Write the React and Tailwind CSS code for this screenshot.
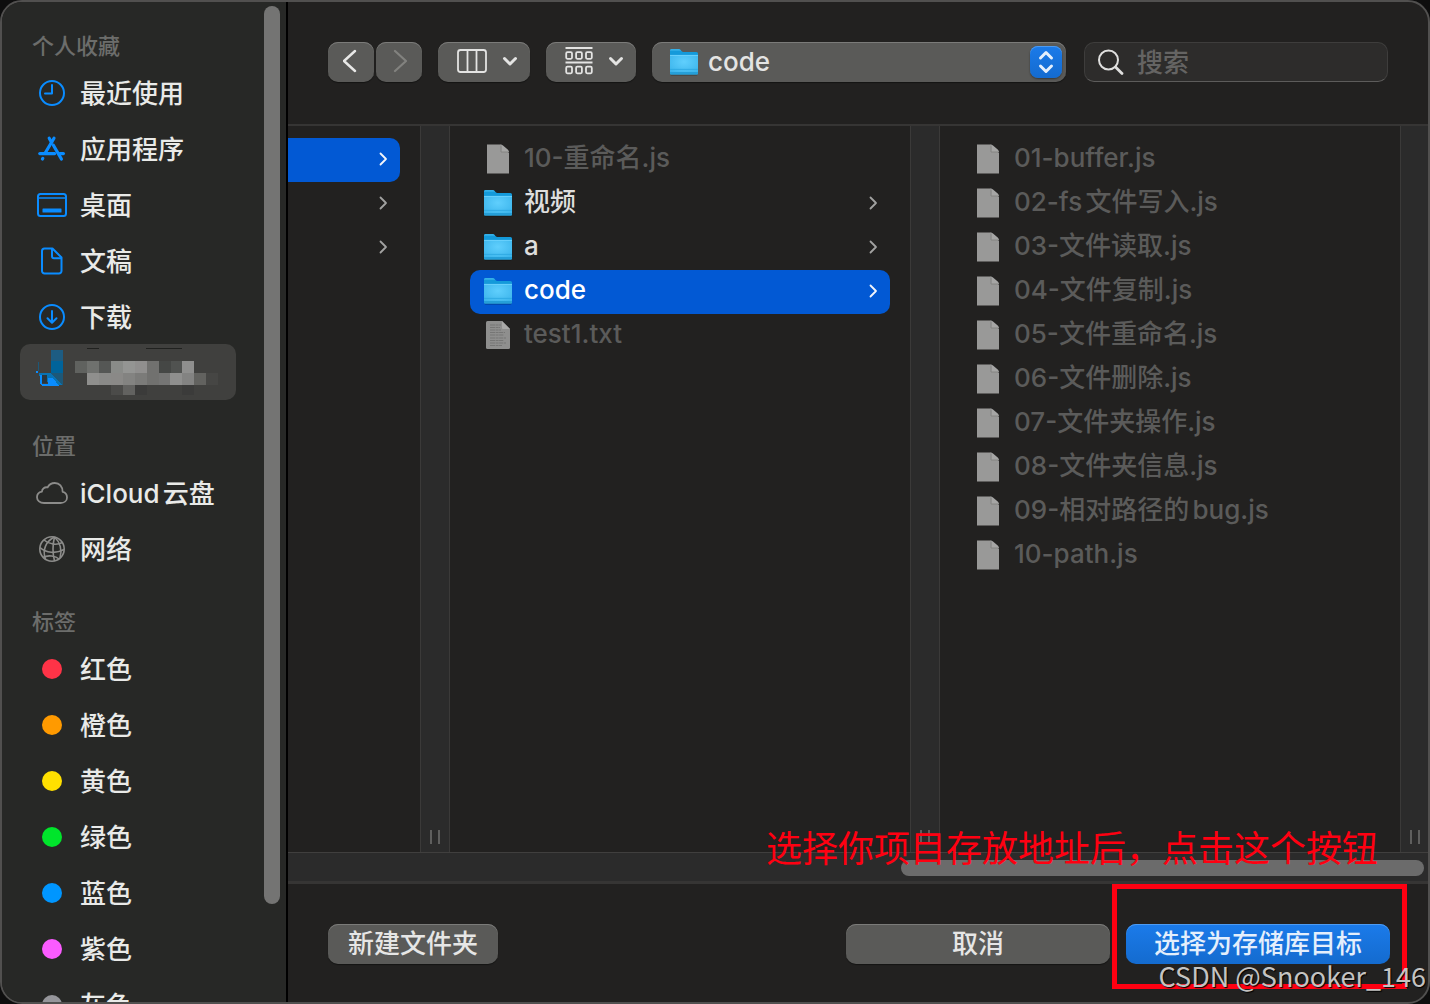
import React from "react";

const BLUE = "#0a8cff";

function ClockIcon() {
  return (
    <svg width="32" height="32" viewBox="0 0 32 32" fill="none" stroke={BLUE} strokeWidth="2">
      <circle cx="16" cy="16" r="12" />
      <path d="M16 8V16.500H9" strokeLinecap="round" strokeLinejoin="round" />
    </svg>
  );
}

function AppsIcon() {
  return (
    <svg width="32" height="32" viewBox="0 0 32 32" fill="none" stroke={BLUE} strokeWidth="3.2" strokeLinecap="round">
      <path d="M13.2 5.2L15.6 9.4" />
      <path d="M18 5.2L9.2 20" />
      <path d="M3.8 20.6H18.6" />
      <path d="M23.6 20.6H27.4" />
      <path d="M17.4 12.2L25.4 26" />
      <path d="M6.8 25.4L6.4 26" />
    </svg>
  );
}

function DesktopIcon() {
  return (
    <svg width="32" height="32" viewBox="0 0 32 32" fill="none" stroke={BLUE} strokeWidth="2">
      <rect x="2" y="5" width="28" height="22" rx="2.5" />
      <path d="M2 9H30" strokeWidth="1.6" />
      <rect x="6.5" y="19.5" width="19" height="4" rx="0.5" fill={BLUE} stroke="none" />
    </svg>
  );
}

function DocumentIcon() {
  return (
    <svg width="32" height="32" viewBox="0 0 32 32" fill="none" stroke={BLUE} strokeWidth="2" strokeLinejoin="round">
      <path d="M8.5 3.5H16.5L25.5 12.5V26A2.5 2.5 0 0 1 23 28.5H8.5A2.5 2.5 0 0 1 6 26V6A2.5 2.5 0 0 1 8.5 3.5Z" />
      <path d="M16 4V11.2A2 2 0 0 0 18 13.2H25" />
    </svg>
  );
}

function DownloadIcon() {
  return (
    <svg width="32" height="32" viewBox="0 0 32 32" fill="none" stroke={BLUE} strokeWidth="2" strokeLinecap="round" strokeLinejoin="round">
      <circle cx="16" cy="16" r="12" />
      <path d="M16 10V21.5M11.5 17.2L16 21.7L20.5 17.2" />
    </svg>
  );
}

function CloudIcon() {
  return (
    <svg width="32" height="32" viewBox="0 0 32 32" fill="none" stroke="#8c8c8a" strokeWidth="1.8" strokeLinejoin="round">
      <path d="M8 26H24.6C28.4 26 31 23.6 31 20.4C31 17.6 29.2 15.4 26.6 14.8C26.6 9.6 23.4 6 18.8 6C15.5 6 12.9 7.7 11.6 10.4C8.6 9.7 6 11.8 5.9 14.7C3 15.3 1 17.5 1 20.2C1 23.5 3.9 26 8 26Z" />
    </svg>
  );
}

function GlobeIcon() {
  return (
    <svg width="32" height="32" viewBox="0 0 32 32" fill="none" stroke="#8c8c8a" strokeWidth="1.6">
      <circle cx="16" cy="16" r="12.2" />
      <path d="M18.500 4C17 10 16.500 20 18.500 28" />
      <path d="M18.500 4C10 8 6 17 9.500 26" />
      <path d="M18.500 4C24 9 26.500 17 24 25" />
      <path d="M8 7C13 11.500 21 12.500 26.500 9.500" />
      <path d="M4 14.500C10 20 20 21 28 16.500" />
      <path d="M7 24.500C12 21.500 20 23 23 26" />
    </svg>
  );
}

function MosaicIcon() {
  return (
    <svg width="32" height="56" viewBox="0 0 32 56" shapeRendering="crispEdges">
      <rect x="15" y="6" width="12" height="11" fill="#1d5c82" />
      <rect x="15" y="17" width="12" height="12" fill="#00639a" />
      <path d="M3 29H15L27 41H15L3 32Z" fill="#0873b4" />
      <path d="M15 29H27V42L20 35Z" fill="#1d5878" />
      <rect x="2" y="18" width="1" height="9" fill="#1d5878" />
      <rect x="0" y="27" width="2" height="2" fill={BLUE} />
      <path d="M4 31H6V40H12V34H17L20 38L23 42H6L4 40Z" fill={BLUE} />
      <rect x="6" y="31" width="5" height="8" fill="#293740" />
    </svg>
  );
}

const MOSAIC = [
  [0, 17, "#60625f"], [12, 17, "#6f716e"], [24, 17, "#555755"], [36, 17, "#898b88"], [48, 17, "#949593"],
  [60, 17, "#908f8e"], [72, 17, "#71716f"], [84, 17, "#454745"], [96, 17, "#505250"], [107, 17, "#8f8f8e"],
  [12, 29, "#8f8f8d"], [24, 29, "#8a8a88"], [36, 29, "#8a8987"], [48, 29, "#838381"], [60, 29, "#7b7b79"],
  [72, 29, "#71716f"], [84, 29, "#757574"], [95, 29, "#8f8f8e"], [107, 29, "#838382"], [119, 29, "#62625f"],
  [131, 29, "#464644"], [36, 41, "#4b4b49"], [48, 41, "#626260"], [60, 41, "#3b3b3a"], [107, 41, "#3b3b3a"],
];

function MosaicName() {
  return (
    <svg width="144" height="56" viewBox="0 0 144 56" shapeRendering="crispEdges" role="img" aria-label="home">
      <rect x="12" y="4" width="12" height="1" fill="#20211f" />
      <rect x="71" y="4" width="36" height="1" fill="#20211f" />
      {MOSAIC.map(([x, y, c]) => (
        <rect key={x + "-" + y} x={x} y={y} width="12" height={y === 41 ? 10 : 12} fill={c} />
      ))}
    </svg>
  );
}

function FolderIcon() {
  return (
    <svg width="28" height="28" viewBox="0 0 28 28" className="shrink-0">
      <defs>
        <radialGradient id="folderFront" cx="0.5" cy="0.35" r="0.75">
          <stop offset="0" stopColor="#60cffd" />
          <stop offset="1" stopColor="#38b2ea" />
        </radialGradient>
      </defs>
      <rect x="0.5" y="25" width="27" height="2.5" rx="1" fill="#000" opacity="0.35" />
      <path d="M0 2.5Q0 1 1.5 1H8.5Q9.5 1 10.3 1.8L11.5 3Q12.3 4 13.5 4H26.5Q28 4 28 5.5V12H0Z" fill="#149ada" />
      <path d="M0 2.5Q0 1 1.5 1H8.5Q9.5 1 10.3 1.8L11.2 2.8H0Z" fill="#35b0e8" />
      <path d="M0 7H28V25.5Q28 26.5 27 26.5H1Q0 26.5 0 25.5Z" fill="url(#folderFront)" />
      <path d="M0 7.4H28" stroke="#74d6ff" strokeWidth="0.8" />
      <path d="M0 21.4H28" stroke="#2ba6df" strokeWidth="0.8" />
      <path d="M0 24H28V25.5Q28 26.5 27 26.5H1Q0 26.5 0 25.5Z" fill="#259fd8" />
    </svg>
  );
}

function FileIcon() {
  return (
    <svg width="28" height="30" viewBox="0 0 28 30" className="shrink-0">
      <path d="M3 0.5H17L25 9V29.5H3Z" fill="#999998" />
      <path d="M16.5 0.5Q18.5 2 17 8H25Q25 7 24 5.8L19 1.5Q17.5 0.5 16.5 0.5Z" fill="#a6a6a5" />
      <path d="M17 1.5V8H24.5" fill="none" stroke="#7d7d7c" strokeWidth="0.8" />
    </svg>
  );
}

function TextFileIcon() {
  return (
    <svg width="28" height="30" viewBox="0 0 28 30" className="shrink-0">
      <path d="M3.5 1H18L26 9V27.5Q26 29 24.5 29H3.5Q2 29 2 27.5V2.5Q2 1 3.5 1Z" fill="#8f8f8e" />
      <path d="M18 1L26 9H19Q18 9 18 8Z" fill="#aaaaa9" />
      <g stroke="#767675" strokeWidth="1.2" strokeDasharray="5 0.6 3 0.5 4 0.7">
        <path d="M6 5H17M6 7.5H16M6 10H17M6 12.5H21M6 15H20M6 18H22M6 20.5H20M6 23H22M6 25.5H18" />
      </g>
    </svg>
  );
}

function ChevronRight({ bright }) {
  return (
    <svg width="10" height="16" viewBox="0 0 10 16" fill="none" stroke={bright ? "#f2f5fb" : "#a2a2a1"} strokeWidth="1.8" strokeLinecap="round" strokeLinejoin="round" className="shrink-0">
      <path d="M2.500 2.500L8 8L2.500 13.500" />
    </svg>
  );
}

function ChevronDown() {
  return (
    <svg width="16" height="12" viewBox="0 0 16 12" fill="none" stroke="#e4e4e3" strokeWidth="3" strokeLinecap="round" strokeLinejoin="round">
      <path d="M2.500 3.500L8 9L13.500 3.500" />
    </svg>
  );
}

function ColumnsIcon() {
  return (
    <svg width="32" height="28" viewBox="0 0 32 28" fill="none" stroke="#e4e4e3" strokeWidth="1.8">
      <rect x="2" y="3" width="28" height="22" rx="2.5" />
      <path d="M11.500 3V25M20.500 3V25" />
    </svg>
  );
}

function GroupIcon() {
  return (
    <svg width="28" height="30" viewBox="0 0 28 30" fill="none" stroke="#e4e4e3" strokeWidth="1.8">
      <path d="M0.500 2H27.500M0.500 16.500H27.500" />
      <rect x="1.2" y="6.2" width="5.800" height="6.600" rx="1.200" />
      <rect x="11.100" y="6.200" width="5.800" height="6.600" rx="1.200" />
      <rect x="21" y="6.200" width="5.800" height="6.600" rx="1.200" />
      <rect x="1.200" y="20.700" width="5.800" height="6.600" rx="1.200" />
      <rect x="11.100" y="20.700" width="5.800" height="6.600" rx="1.200" />
      <rect x="21" y="20.700" width="5.800" height="6.600" rx="1.200" />
    </svg>
  );
}

const FAVORITES = [
  ["最近使用", ClockIcon],
  ["应用程序", AppsIcon],
  ["桌面", DesktopIcon],
  ["文稿", DocumentIcon],
  ["下载", DownloadIcon],
];

const LOCATIONS = [
  ["iCloud云盘", CloudIcon],
  ["网络", GlobeIcon],
];

const TAGS = [
  ["红色", "#ff3347"],
  ["橙色", "#ff9a00"],
  ["黄色", "#ffe000"],
  ["绿色", "#00e52b"],
  ["蓝色", "#0096ff"],
  ["紫色", "#fb5bff"],
  ["灰色", "#96969b"],
];

const FOLDER_ITEMS = [
  { name: "10-重命名.js", kind: "file" },
  { name: "视频", kind: "folder" },
  { name: "a", kind: "folder" },
  { name: "code", kind: "folder", selected: true },
  { name: "test1.txt", kind: "text" },
];

const CODE_ITEMS = [
  "01-buffer.js",
  "02-fs文件写入.js",
  "03-文件读取.js",
  "04-文件复制.js",
  "05-文件重命名.js",
  "06-文件删除.js",
  "07-文件夹操作.js",
  "08-文件夹信息.js",
  "09-相对路径的bug.js",
  "10-path.js",
].map((name) => ({ name, kind: "file" }));

function Heading({ children, first }) {
  return (
    <h2 className={(first ? "pt-[26px]" : "pt-7") + " pl-3 text-[22px] leading-9 font-medium text-[#6c6d6b]"}>
      {children}
    </h2>
  );
}

function SideItem({ label, icon }) {
  return (
    <li>
      <button type="button" className="flex h-14 w-full items-center gap-3 rounded-[10px] pt-0.5 pl-4 text-left whitespace-nowrap">
        <span className="flex w-8 shrink-0 justify-center">{icon}</span>
        {label}
      </button>
    </li>
  );
}

function Sidebar() {
  return (
    <aside className="flex w-[286px] shrink-0 overflow-hidden border-r-2 border-black bg-[#272826]">
      <nav className="min-w-0 flex-1 pr-7 pl-[18px] text-[26px] font-medium text-[#e9eae8]">
        <Heading first>个人收藏</Heading>
        <ul>
          {FAVORITES.map(([name, Icon]) => (
            <SideItem key={name} icon={<Icon />} label={name} />
          ))}
          <li>
            <button type="button" className="flex h-14 w-full items-center gap-[7px] rounded-[10px] bg-[#40403e] pl-4">
              <MosaicIcon />
              <MosaicName />
            </button>
          </li>
        </ul>
        <Heading>位置</Heading>
        <ul>
          {LOCATIONS.map(([name, Icon]) => (
            <SideItem key={name} icon={<Icon />} label={name} />
          ))}
        </ul>
        <Heading>标签</Heading>
        <ul>
          {TAGS.map(([name, color]) => (
            <SideItem
              key={name}
              label={name}
              icon={<span className="size-5 rounded-full" style={{ backgroundColor: color }} />}
            />
          ))}
        </ul>
      </nav>
      <div className="mt-1 mr-1.5 h-[898px] w-4 shrink-0 rounded-full bg-[#747473]" />
    </aside>
  );
}

const ICONS = { file: FileIcon, folder: FolderIcon, text: TextFileIcon };

function Row({ item }) {
  const Icon = ICONS[item.kind];
  const folder = item.kind === "folder";
  const tone = item.selected ? "bg-[#0259d4] text-white" : folder ? "text-[#dededd]" : "text-[#5b5b5a]";
  return (
    <li>
      <button type="button" className={"flex h-11 w-full items-center gap-3 rounded-[10px] pr-3 pb-0.5 pl-3.5 text-left leading-9 whitespace-nowrap " + tone}>
        <Icon />
        <span className="flex-1 pb-0.5">{item.name}</span>
        {folder && <ChevronRight bright={item.selected} />}
      </button>
    </li>
  );
}

function Divider({ last }) {
  return (
    <div className={(last ? "w-7" : "w-[30px] border-r") + " flex shrink-0 items-end justify-center gap-1.5 border-l border-[#3b3a39] bg-[#2b2b2b] pb-2"}>
      <span className="h-3.5 w-0.5 bg-[#5f5f5e]" />
      <span className="h-3.5 w-0.5 bg-[#5f5f5e]" />
    </div>
  );
}

const CONTROL =
  "flex h-10 items-center rounded-[10px] bg-[#5a5a58] shadow-[inset_0_1px_0_#7b7b79,0_1px_1px_rgba(0,0,0,0.4)]";

function Toolbar() {
  return (
    <header className="flex h-[124px] shrink-0 items-start border-b-2 border-[#363534] pt-10 pr-10 pl-10">
      <button type="button" aria-label="后退" className={CONTROL + " w-[46px] justify-center"}>
        <svg width="16" height="26" viewBox="0 0 16 26" fill="none" stroke="#e8e8e7" strokeWidth="2.4" strokeLinecap="round" strokeLinejoin="round">
          <path d="M12 2L1 12L12 22" />
        </svg>
      </button>
      <button type="button" aria-label="前进" className={CONTROL + " ml-0.5 w-[46px] justify-center"}>
        <svg width="16" height="26" viewBox="0 0 16 26" fill="none" stroke="#82827f" strokeWidth="2.2" strokeLinecap="round" strokeLinejoin="round">
          <path d="M4 2L15 12L4 22" />
        </svg>
      </button>
      <button type="button" aria-label="分栏显示" className={CONTROL + " ml-4 w-[92px] justify-between pr-3 pb-0.5 pl-[18px]"}>
        <ColumnsIcon />
        <ChevronDown />
      </button>
      <button type="button" aria-label="分组方式" className={CONTROL + " ml-4 w-[90px] justify-between pr-3 pb-0.5 pl-[19px]"}>
        <GroupIcon />
        <ChevronDown />
      </button>
      <div className={CONTROL + " ml-4 min-w-0 flex-1 pr-1 pl-[18px]"}>
        <FolderIcon />
        <select aria-label="位置" className="h-10 min-w-0 flex-1 appearance-none bg-transparent pb-1 pl-2.5 text-[26px] font-medium text-[#e4e4e3] outline-none">
          <option>code</option>
        </select>
        <span className="flex size-8 items-center justify-center rounded-lg bg-linear-to-b from-[#1b7bea] to-[#146bcf] shadow-[inset_0_1px_0_#4d9bf2,0_1px_2px_rgba(0,0,0,0.4)]">
          <svg width="18" height="24" viewBox="0 0 18 24" fill="none" stroke="#e4effc" strokeWidth="3" strokeLinecap="round" strokeLinejoin="round">
            <path d="M3.500 8L9 2.500L14.500 8M3.500 16L9 21.500L14.500 16" />
          </svg>
        </span>
      </div>
      <label className="ml-[18px] flex h-10 w-[304px] items-center gap-3 rounded-[10px] border border-[#3e3d3c] border-b-[#5d5c5b] bg-[#2d2c2b] pl-3">
        <svg width="28" height="28" viewBox="0 0 28 28" fill="none" stroke="#dfdfde" strokeLinecap="round" className="shrink-0">
          <circle cx="11.500" cy="12" r="9.500" strokeWidth="2" />
          <path d="M18.500 19L25 25.500" strokeWidth="2.800" />
        </svg>
        <input
          type="text"
          aria-label="搜索"
          placeholder="搜索"
          className="min-w-0 flex-1 bg-transparent text-[26px] font-medium text-[#dededd] outline-none placeholder:text-[#656463]"
        />
      </label>
    </header>
  );
}

export default function App() {
  return (
    <div className="h-screen bg-[#0e0e0e] font-['Inter','Noto_Sans_CJK_SC',sans-serif] [text-autospace:normal]">
      <div className="relative flex h-full overflow-hidden rounded-[22px] border-2 border-[#51504f] bg-[#222120]">
        <Sidebar />
        <main className="flex min-w-0 flex-1 flex-col">
          <Toolbar />
          <section className="flex min-h-0 flex-1 text-[26px] font-medium">
            <ul className="w-[132px] shrink-0 pt-3 pr-5">
              {[true, false, false].map((selected, i) => (
                <li key={i}>
                  <button
                    type="button"
                    aria-label="打开文件夹"
                    className={"flex h-11 w-full items-center justify-end rounded-r-[10px] pr-3 pb-0.5 " + (selected ? "bg-[#0259d4]" : "")}
                  >
                    <ChevronRight bright={selected} />
                  </button>
                </li>
              ))}
            </ul>
            <Divider />
            <ul className="min-w-0 flex-1 px-5 pt-3">
              {FOLDER_ITEMS.map((item) => (
                <Row key={item.name} item={item} />
              ))}
            </ul>
            <Divider />
            <ul className="min-w-0 flex-1 px-5 pt-3">
              {CODE_ITEMS.map((item) => (
                <Row key={item.name} item={item} />
              ))}
            </ul>
            <Divider last />
          </section>
          <div className="flex h-8 shrink-0 justify-end border-t border-b-[3px] border-t-[#403f3e] border-b-[#363534] bg-[#2b2b2b] pt-[7px] pr-1">
            <div className="h-4 w-[46%] rounded-full bg-[#6b6b6b]" />
          </div>
          <footer className="flex h-[118px] shrink-0 items-start pt-10 pr-[38px] pl-10 text-[26px] font-medium text-[#e6e6e5]">
            <button type="button" className={CONTROL + " w-[170px] justify-center pb-0.5"}>
              新建文件夹
            </button>
            <button type="button" className={CONTROL + " mr-4 ml-auto w-[264px] justify-center pb-0.5"}>
              取消
            </button>
            <div className="relative">
              <button type="button" className="flex h-10 w-[264px] items-center justify-center rounded-[10px] bg-linear-to-b from-[#1b7bea] to-[#146bcf] pb-0.5 text-[#e4effc] shadow-[inset_0_1px_0_#4d9bf2]">
                选择为存储库目标
              </button>
              <div className="pointer-events-none absolute -top-10 -right-[17px] -bottom-[25px] -left-3.5 border-5 border-[#ff0011]" />
              <p className="pointer-events-none absolute right-3 bottom-[88px] text-4xl leading-[54px] font-normal whitespace-nowrap text-[#ff0011]">
                选择你项目存放地址后，点击这个按钮
              </p>
            </div>
          </footer>
        </main>
        <p className="pointer-events-none absolute right-0.5 bottom-1.5 font-['Noto_Sans_CJK_SC',sans-serif] text-[27px] leading-10 text-[#c4c3c2] [text-shadow:1px_1px_1px_#000]">
          CSDN @Snooker_146
        </p>
      </div>
    </div>
  );
}
